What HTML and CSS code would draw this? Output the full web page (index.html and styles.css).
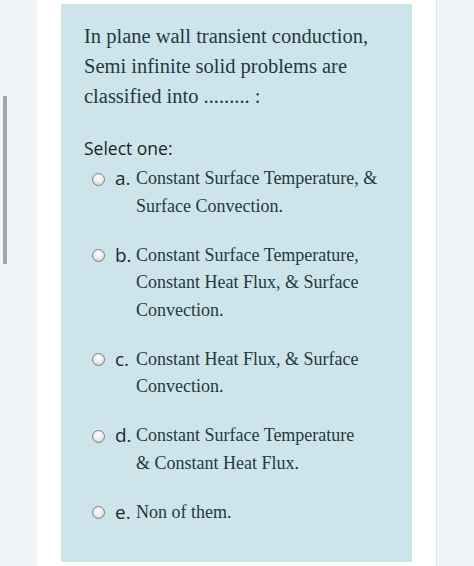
FILE: index.html
```html
<!DOCTYPE html>
<html lang="en">
<head>
<meta charset="utf-8">
<title>Quiz question</title>
<link rel="stylesheet" href="styles.css">
</head>
<body>
<div class="page">
  <aside class="side side-left">
    <div class="thumb"></div>
  </aside>
  <main class="main">
    <section class="card">
      <p class="question">In plane wall transient conduction, Semi infinite solid problems are classified into ......... :</p>
      <div class="prompt">Select one:</div>
      <div class="options">
        <label class="option"><span class="radio"></span><span class="letter">a.</span><span class="text">Constant Surface Temperature, &amp; Surface Convection.</span></label>
        <label class="option"><span class="radio"></span><span class="letter">b.</span><span class="text">Constant Surface Temperature, Constant Heat Flux, &amp; Surface Convection.</span></label>
        <label class="option"><span class="radio"></span><span class="letter">c.</span><span class="text">Constant Heat Flux, &amp; Surface Convection.</span></label>
        <label class="option"><span class="radio"></span><span class="letter">d.</span><span class="text">Constant Surface Temperature &amp;&nbsp;Constant Heat Flux.</span></label>
        <label class="option"><span class="radio"></span><span class="letter">e.</span><span class="text">Non of them.</span></label>
      </div>
    </section>
  </main>
  <aside class="side side-right"></aside>
</div>
</body>
</html>
```

FILE: styles.css
```css
html, body {
  margin: 0;
  padding: 0;
  background: #ffffff;
}

.page {
  display: flex;
  height: 566px;
  overflow: hidden;
}

.side {
  background: #f1f5f8;
}

.side-left {
  width: 37px;
  padding-top: 96px;
  box-sizing: border-box;
}

.thumb {
  width: 4px;
  height: 168px;
  margin-left: 3px;
  background: #a3a7ab;
  border-radius: 1px;
}

.side-right {
  flex: 1;
  border-left: 1px solid #e1e5e9;
}

.main {
  width: 399px;
  padding: 4px 24px 0;
  box-sizing: border-box;
  background: #ffffff;
}

.card {
  background: #cde5ea;
  padding: 17px 17px 33px 23px;
  height: 558px;
  box-sizing: border-box;
  color: #1e3a40;
}

.question {
  margin: 0;
  font-family: "Liberation Serif", "Times New Roman", serif;
  font-size: 20.5px;
  line-height: 30px;
}

.prompt {
  margin-top: 25px;
  font-family: "Open Sans", "Liberation Sans", sans-serif;
  font-size: 17.5px;
  line-height: 24px;
  color: #1b1f22;
}

.options {
  margin-top: 5px;
  display: flex;
  flex-direction: column;
  gap: 21.5px;
}

.option {
  display: flex;
  align-items: flex-start;
  font-family: "Liberation Serif", "Times New Roman", serif;
  font-size: 18px;
  line-height: 27.5px;
}

.radio {
  flex: none;
  width: 13px;
  height: 13px;
  margin: 7.5px 0 0 8px;
  box-sizing: border-box;
  border-radius: 50%;
  border: 1px solid #7d8184;
  background: radial-gradient(circle at 50% 35%, #ffffff 0%, #eeeeee 45%, #c4c6c8 100%);
}

.letter {
  flex: none;
  width: 21px;
  margin-left: 10px;
  font-family: "Open Sans", "Liberation Sans", sans-serif;
  font-size: 19px;
  color: #1b2a30;
}

.text {
  flex: 1;
}
```
